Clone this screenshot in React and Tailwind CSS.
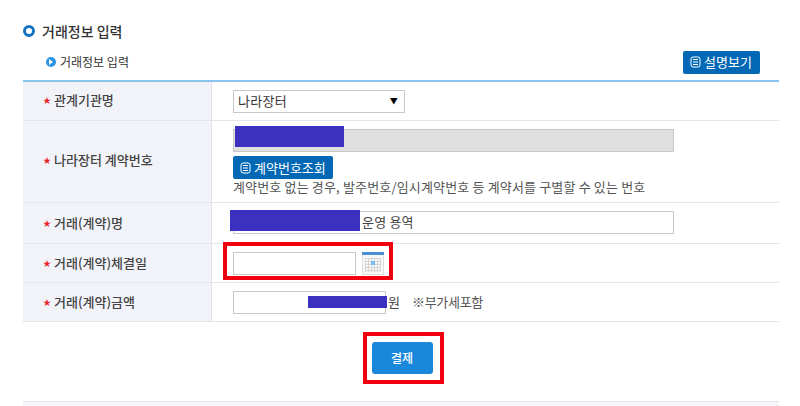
const font = { fontFamily: '"Noto Sans CJK KR", "Noto Sans", sans-serif' };

function NoteIcon() {
  return (
    <svg width="11" height="12" viewBox="0 0 11 12" fill="none" stroke="#fff" strokeWidth="1">
      <rect x="1" y="1" width="9" height="10" rx="2" />
      <path d="M3 3.5h5M3 6h5M3 8.5h5" />
    </svg>
  );
}

function CalendarIcon() {
  return (
    <svg width="22" height="23" viewBox="0 0 22 23">
      <rect x="0.5" y="0.5" width="21" height="22" fill="#f7f7f7" stroke="#dedede" />
      <rect x="0" y="0" width="22" height="3" fill="#4a90d0" />
      <path
        d="M3.500 6v14M6.500 6v14M9.500 6v14M12.500 6v14M15.500 6v14M18.500 6v14M3 6.500h16M3 9.500h16M3 12.500h16M3 15.500h16M3 18.500h16"
        stroke="#d6d6d6"
        strokeWidth="1"
      />
      <rect x="9" y="9" width="4" height="4" fill="#7dbcec" />
    </svg>
  );
}

function Row({ label, className, labelClass = "", children }) {
  return (
    <div className={`grid grid-cols-[189px_1fr] border-b border-[#e3e5ea] ${className}`}>
      <div className={`flex items-center bg-[#f2f3f8] border-r border-[#e0e3ea] pl-[20px] text-[13px] font-medium text-[#444] ${labelClass}`}>
        <span className="text-[#e8202a] w-[11px] text-[8px]">★</span>
        {label}
      </div>
      <div className="relative pl-[21px]">{children}</div>
    </div>
  );
}

export default function App() {
  return (
    <div className="w-[800px] h-[406px] overflow-hidden bg-white" style={font}>
      <div className="flex items-center h-[20px] mt-[21px] ml-[23px] text-[14px] font-medium text-[#333]">
        <span className="w-[12px] h-[12px] rounded-full border-[3px] border-[#1673c0] mr-[7px]"></span>
        거래정보 입력
      </div>

      <div className="flex items-center justify-between h-[24px] mt-[9px] ml-[46px] mr-[40px]">
        <div className="flex items-center text-[12px] text-[#333]">
          <span className="flex items-center justify-center w-[10px] h-[10px] rounded-full bg-[#2d95e5] mr-[4px]">
            <span className="border-y-[3px] border-l-[4px] border-y-transparent border-l-white"></span>
          </span>
          거래정보 입력
        </div>
        <button className="flex items-center gap-[3px] w-[77px] h-[23px] pl-[7px] bg-[#0068b4] rounded-[2px] text-[13px] text-white">
          <NoteIcon />
          설명보기
        </button>
      </div>

      <div className="ml-[23px] mr-[21px] mt-[6px] border-t-2 border-[#8cc4ee]">
        <Row label="관계기관명" className="h-[39px]" labelClass="pb-[3px]">
          <div className="flex items-center h-full">
            <div className="flex items-center justify-between w-[172px] h-[23px] pl-[4px] pr-[6px] pb-[1px] border border-[#c8c8c8] text-[13px] tracking-[0.3px] text-[#333] bg-white">
              나라장터
              <span className="text-[8px] text-black">▼</span>
            </div>
          </div>
        </Row>

        <Row label="나라장터 계약번호" className="h-[82px]" labelClass="pb-[3px]">
          <div className="pt-[8px]">
            <div className="w-[441px] h-[23px] bg-[#e0e0e0] border border-[#c8c8c8]"></div>
            <button className="flex items-center gap-[3px] w-[100px] h-[23px] mt-[4px] pl-[7px] bg-[#0068b4] rounded-[2px] text-[13px] text-white">
              <NoteIcon />
              계약번호조회
            </button>
            <p className="text-[13px] leading-[15px] tracking-[0.16px] text-[#555] whitespace-nowrap">
              계약번호 없는 경우, 발주번호/임시계약번호 등 계약서를 구별할 수 있는 번호
            </p>
          </div>
          <div className="absolute left-[23px] top-[5px] w-[109px] h-[21px] bg-[#3b30bf]"></div>
        </Row>

        <Row label="거래(계약)명" className="h-[41px]" labelClass="pb-[1px]">
          <div className="flex items-center h-full pb-[2px]">
            <div className="flex items-center w-[441px] h-[23px] pl-[128px] border border-[#c8c8c8] text-[13px] tracking-[0.2px] text-[#444]">
              운영 용역
            </div>
          </div>
          <div className="absolute left-[18px] top-[7px] w-[130px] h-[21px] bg-[#3b30bf]"></div>
        </Row>

        <Row label="거래(계약)체결일" className="h-[39px]">
          <div className="flex items-center gap-[6px] h-full">
            <div className="w-[123px] h-[23px] border border-[#c8c8c8]"></div>
            <CalendarIcon />
          </div>
          <div className="absolute left-[11px] top-[-2px] w-[170px] h-[38px] border-[4px] border-[#f0000f]"></div>
        </Row>

        <Row label="거래(계약)금액" className="h-[39px]">
          <div className="flex items-center h-full text-[13px] text-[#444]">
            <div className="w-[153px] h-[23px] border border-[#c8c8c8]"></div>
            <span className="ml-[2px]">원</span>
            <span className="ml-[12px] tracking-[-0.3px] text-[#555]">※부가세포함</span>
          </div>
          <div className="absolute left-[96px] top-[13px] w-[79px] h-[12px] bg-[#3b30bf]"></div>
        </Row>

        <div className="flex justify-center h-[79px] pl-[4px] pt-[10px]">
          <div className="border-[4px] border-[#f0000f] w-[81px] h-[52px] pl-[5px] pr-[7px] py-[6px]">
            <button className="w-full h-full bg-[#1a88da] rounded-[3px] text-[12px] font-medium text-white">
              결제
            </button>
          </div>
        </div>
      </div>

      <div className="ml-[23px] mr-[21px] h-[10px] bg-[#f4f5f8] border-t border-[#e3e5ea]"></div>
    </div>
  );
}
